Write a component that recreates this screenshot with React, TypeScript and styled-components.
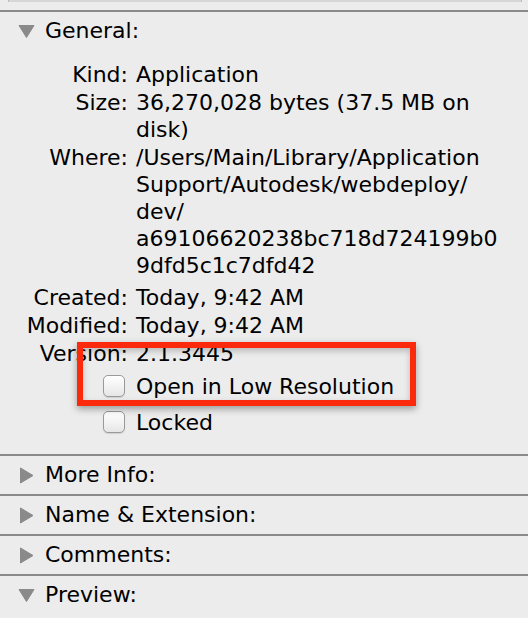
import styled, { createGlobalStyle } from "styled-components";

const GlobalStyle = createGlobalStyle`
  html, body {
    margin: 0;
    padding: 0;
    background: #ececec;
  }
  body {
    font-family: "DejaVu Sans", "Liberation Sans", sans-serif;
    font-size: 22px;
    color: #000;
  }
`;

const Panel = styled.div`
  position: relative;
  width: 528px;
  height: 618px;
  overflow: hidden;
  background: #ececec;
`;

const TopField = styled.div`
  height: 2px;
  margin: 0 6px 0 8px;
  background: #d6d6d6;
  border-left: 1px solid #bdbdbd;
  border-right: 1px solid #bdbdbd;
`;

const Section = styled.section<{ $first?: boolean }>`
  border-top: 2px solid #8a8a8a;
  margin-top: ${(p) => (p.$first ? "8px" : "0")};
`;

const Header = styled.div`
  display: flex;
  align-items: center;
  height: 38px;
  padding-left: 18px;
  gap: 10px;
  line-height: 1;
`;

const Arrow = styled.svg`
  flex: none;
  width: 17px;
  height: 17px;
`;

const Body = styled.div`
  padding: 11px 0 14px;
`;

const InfoGrid = styled.div`
  display: grid;
  grid-template-columns: 128px 1fr;
  column-gap: 8px;
  row-gap: 1px;
  line-height: 27px;
`;

const Label = styled.div<{ $gap?: number }>`
  text-align: right;
  white-space: nowrap;
  margin-top: ${(p) => p.$gap ?? 0}px;
`;

const Value = styled.div<{ $gap?: number }>`
  white-space: nowrap;
  margin-top: ${(p) => p.$gap ?? 0}px;
`;

const CheckRow = styled.label`
  display: flex;
  align-items: center;
  gap: 11px;
  height: 36px;
  padding-left: 103px;
`;

const CheckBox = styled.span`
  flex: none;
  width: 20px;
  height: 20px;
  border: 1px solid #9a9a9a;
  border-radius: 5px;
  background: linear-gradient(#ffffff, #f2f2f2 55%, #e6e6e6);
  box-shadow: 0 1px 1px rgba(0, 0, 0, 0.12);
`;

const Callout = styled.div`
  position: absolute;
  left: 77px;
  top: 342px;
  width: 339px;
  height: 64px;
  box-sizing: border-box;
  border: 6px solid #fc2a0c;
  box-shadow: 0 3px 7px rgba(0, 0, 0, 0.35), inset 0 3px 6px rgba(0, 0, 0, 0.22);
`;

const DownArrow = () => (
  <Arrow viewBox="0 0 17 17">
    <path d="M1 2.5 L16 2.5 L8.5 14.5 Z" fill="#8a8a8a" stroke="#8a8a8a" strokeWidth="1" strokeLinejoin="round" />
  </Arrow>
);

const RightArrow = () => (
  <Arrow viewBox="0 0 17 17">
    <path d="M2.5 1 L15 8.5 L2.5 16 Z" fill="#8a8a8a" stroke="#8a8a8a" strokeWidth="1" strokeLinejoin="round" />
  </Arrow>
);

const collapsed = ["More Info:", "Name & Extension:", "Comments:"];

const App = () => {
  return (
    <Panel>
      <GlobalStyle />
      <TopField />
      <Section $first>
        <Header>
          <DownArrow />
          General:
        </Header>
        <Body>
          <InfoGrid>
            <Label>Kind:</Label>
            <Value>Application</Value>
            <Label>Size:</Label>
            <Value>
              36,270,028 bytes (37.5 MB on
              <br />
              disk)
            </Value>
            <Label>Where:</Label>
            <Value>
              /Users/Main/Library/Application
              <br />
              Support/Autodesk/webdeploy/
              <br />
              dev/
              <br />
              a69106620238bc718d724199b0
              <br />
              9dfd5c1c7dfd42
            </Value>
            <Label $gap={4}>Created:</Label>
            <Value $gap={4}>Today, 9:42 AM</Value>
            <Label>Modified:</Label>
            <Value>Today, 9:42 AM</Value>
            <Label>Version:</Label>
            <Value>2.1.3445</Value>
          </InfoGrid>
          <div style={{ height: 1 }} />
          <CheckRow>
            <CheckBox />
            Open in Low Resolution
          </CheckRow>
          <CheckRow>
            <CheckBox />
            Locked
          </CheckRow>
        </Body>
      </Section>
      {collapsed.map((t) => (
        <Section key={t}>
          <Header>
            <RightArrow />
            {t}
          </Header>
        </Section>
      ))}
      <Section>
        <Header>
          <DownArrow />
          Preview:
        </Header>
      </Section>
      <Callout />
    </Panel>
  );
};

export default App;
